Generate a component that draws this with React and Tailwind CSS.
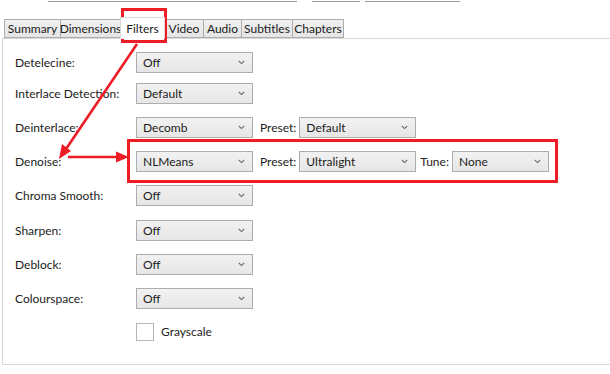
import React from "react";

const tabs = [
  { name: "Summary", w: "w-[57px]" },
  { name: "Dimensions", w: "w-[61px]" },
  { name: "Filters", w: "w-[45px]", active: true },
  { name: "Video", w: "w-[40px]" },
  { name: "Audio", w: "w-[39px]" },
  { name: "Subtitles", w: "w-[52px]" },
  { name: "Chapters", w: "w-[52px]" },
];

const Chevron = () => (
  <svg width="7" height="5" viewBox="0 0 7 5" className="shrink-0">
    <path d="M0.8 1 L3.5 3.6 L6.2 1" fill="none" stroke="#6b6b6b" strokeWidth="1.1" />
  </svg>
);

const Select = ({ value, w = "w-[117px]" }) => (
  <div
    className={`${w} shrink-0 h-[21px] flex items-center justify-between pl-[6px] pr-[7px] border border-[#adadad] bg-gradient-to-b from-[#f2f2f2] to-[#e6e6e6] text-[#1b1b1b]`}
  >
    <span>{value}</span>
    <Chevron />
  </div>
);

const Row = ({ label, value, mt, children }) => (
  <div className={`flex items-center h-[21px] ${mt}`}>
    <div className="w-[133px] shrink-0 pl-[12px] whitespace-nowrap text-[#222]">{label}</div>
    <Select value={value} />
    {children}
  </div>
);

const Extra = ({ label, value, w, ml }) => (
  <div className={`flex items-center shrink-0 ${ml}`}>
    <span className="text-[#222] whitespace-nowrap">{label}</span>
    <div className="ml-[3px]">
      <Select value={value} w={w} />
    </div>
  </div>
);

export default function App() {
  return (
    <div
      className="relative w-[610px] h-[374px] bg-white overflow-hidden text-[12px] leading-none"
      style={{ fontFamily: 'Lato, "Noto Sans", sans-serif' }}
    >
      {/* cut-off controls at the very top */}
      <div className="flex h-[2px]">
        <div className="ml-[48px] w-[249px] border-b border-[#9a9a9a]" />
        <div className="ml-[15px] w-[48px] border-b border-[#9a9a9a]" />
        <div className="ml-[5px] w-[95px] border-b border-[#9a9a9a]" />
      </div>

      {/* tabs */}
      <div className="flex items-end h-[36px] pl-[4px]">
        {tabs.map((t) =>
          t.active ? (
            <div
              key={t.name}
              className={`${t.w} shrink-0 h-[22px] -mb-px -ml-px z-10 flex items-center justify-center bg-white border border-b-0 border-[#d9d9d9] text-[#1b1b1b] whitespace-nowrap`}
            >
              {t.name}
            </div>
          ) : (
            <div
              key={t.name}
              className={`${t.w} shrink-0 h-[19px] -ml-px first:ml-0 flex items-center justify-center bg-gradient-to-b from-[#f0f0f0] to-[#e5e5e5] border border-[#acacac] text-[#1b1b1b] whitespace-nowrap`}
            >
              {t.name}
            </div>
          )
        )}
      </div>

      {/* panel */}
      <div className="ml-[2px] w-[620px] h-[327px] border border-[#d9d9d9] pt-[13px]">
        <Row label="Detelecine:" value="Off" mt="mt-0" />
        <Row label="Interlace Detection:" value="Default" mt="mt-[10px]" />
        <Row label="Deinterlace:" value="Decomb" mt="mt-[13px]">
          <Extra label="Preset:" value="Default" w="w-[117px]" ml="ml-[7px]" />
        </Row>
        <Row label="Denoise:" value="NLMeans" mt="mt-[13px]">
          <Extra label="Preset:" value="Ultralight" w="w-[117px]" ml="ml-[7px]" />
          <Extra label="Tune:" value="None" w="w-[97px]" ml="ml-[4px]" />
        </Row>
        <Row label="Chroma Smooth:" value="Off" mt="mt-[13px]" />
        <Row label="Sharpen:" value="Off" mt="mt-[14px]" />
        <Row label="Deblock:" value="Off" mt="mt-[13px]" />
        <Row label="Colourspace:" value="Off" mt="mt-[13px]" />
        <div className="flex items-center mt-[14px] pl-[133px]">
          <div className="w-[18px] h-[18px] border border-[#b5b5b5] bg-white" />
          <span className="ml-[7px] text-[#222]">Grayscale</span>
        </div>
      </div>

      {/* red annotations */}
      <div className="absolute left-[121px] top-[8px] w-[46px] h-[35px] border-[3px] border-[#ee1c24]" />
      <div className="absolute left-[127px] top-[139px] w-[431px] h-[44px] border-[3px] border-[#ee1c24]" />
      <svg className="absolute left-0 top-0" width="610" height="374">
        <line x1="137" y1="44" x2="66" y2="149" stroke="#ee1c24" strokeWidth="2.6" />
        <polygon points="59,159 62,144 71,151" fill="#ee1c24" />
        <line x1="68" y1="157" x2="118" y2="157" stroke="#ee1c24" strokeWidth="2.6" />
        <polygon points="129,157 116,151.5 116,162.5" fill="#ee1c24" />
      </svg>
    </div>
  );
}
